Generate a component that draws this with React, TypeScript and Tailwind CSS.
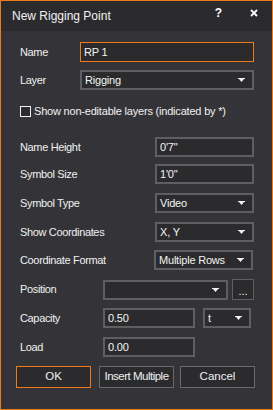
const font = { fontFamily: "'Liberation Sans', Arial, sans-serif" };

function Arrow() {
  return (
    <svg width="7" height="4" viewBox="0 0 7 4" className="shrink-0">
      <path d="M0 0H7V1H6L3.5 4L1 1H0Z" fill="#f2f2f2" />
    </svg>
  );
}

function TextBox({ value, w, active }: { value: string; w: string; active?: boolean }) {
  return (
    <div
      className={`${w} h-[20px] flex items-center px-[3px] bg-[#2b2b2d] text-[#f4f4f4] text-[11px] tracking-[-0.2px] ${
        active ? 'border border-[#f07a1a]' : 'border-2 border-[#5f5f62]'
      }`}
    >
      {value}
    </div>
  );
}

function Select({ value, w }: { value: string; w: string }) {
  return (
    <div className={`${w} h-[20px] flex items-center justify-between pl-[3px] pr-[7px] bg-[#2b2b2d] border-2 border-[#5f5f62] text-[#f4f4f4] text-[11px] tracking-[-0.2px]`}>
      <span>{value}</span>
      <Arrow />
    </div>
  );
}

function Row({ label, lw, mt, children }: { label: string; lw: string; mt: string; children: React.ReactNode }) {
  return (
    <div className={`flex items-center ${mt}`}>
      <div className={`${lw} shrink-0 pl-[19px] text-[11px] text-[#f0f0f0] tracking-[-0.35px]`}>{label}</div>
      {children}
    </div>
  );
}

export default function App() {
  return (
    <div className="w-[273px] h-[410px] border border-[#f07a1a] bg-[#343438] flex flex-col" style={font}>
      {/* Title bar */}
      <div className="h-[30px] bg-[#2b2b2e] flex items-center pl-[11px] pr-[14px] text-white">
        <span className="text-[12px] text-[#f2f2f2]">New Rigging Point</span>
        <span className="ml-auto text-[12px] font-bold mr-[28px] -mt-[6px]">?</span>
        <svg width="8" height="8" viewBox="0 0 8 8" className="-mt-[6px]">
          <path d="M1 1L7 7M7 1L1 7" stroke="#fff" strokeWidth="1.8" />
        </svg>
      </div>

      {/* Body */}
      <div className="flex flex-col">
        <Row label="Name" lw="w-[79px]" mt="mt-[11px]">
          <TextBox value="RP 1" w="w-[174px]" active />
        </Row>
        <Row label="Layer" lw="w-[79px]" mt="mt-[8px]">
          <Select value="Rigging" w="w-[174px]" />
        </Row>

        <div className="flex items-center mt-[16px] pl-[19px] h-[11px]">
          <div className="w-[11px] h-[11px] border border-[#f0f0f0] bg-[#2b2b2d]" />
          <span className="ml-[3px] text-[11px] text-[#f0f0f0] tracking-[-0.2px]">Show non-editable layers (indicated by *)</span>
        </div>

        <Row label="Name Height" lw="w-[154px]" mt="mt-[20px]">
          <TextBox value={'0\'7"'} w="w-[99px]" />
        </Row>
        <Row label="Symbol Size" lw="w-[154px]" mt="mt-[7px]">
          <TextBox value={'1\'0"'} w="w-[99px]" />
        </Row>
        <Row label="Symbol Type" lw="w-[154px]" mt="mt-[9px]">
          <Select value="Video" w="w-[99px]" />
        </Row>
        <Row label="Show Coordinates" lw="w-[154px]" mt="mt-[9px]">
          <Select value="X, Y" w="w-[99px]" />
        </Row>
        <Row label="Coordinate Format" lw="w-[153px]" mt="mt-[8px]">
          <Select value="Multiple Rows" w="w-[99px]" />
        </Row>

        <Row label="Position" lw="w-[102px]" mt="mt-[9px]">
          <Select value="" w="w-[125px]" />
          <div className="ml-[4px] w-[22px] h-[21px] border border-[#5f5f62] bg-[#2b2b2d] flex items-center justify-center text-[11px] text-[#f0f0f0] pt-[3px]">
            ...
          </div>
        </Row>
        <Row label="Capacity" lw="w-[102px]" mt="mt-[8px]">
          <TextBox value="0.50" w="w-[92px]" />
          <div className="ml-[8px]">
            <Select value="t" w="w-[48px]" />
          </div>
        </Row>
        <Row label="Load" lw="w-[102px]" mt="mt-[9px]">
          <TextBox value="0.00" w="w-[92px]" />
        </Row>

        <div className="flex mt-[9px] pl-[15px] gap-[9px] text-[11.5px] text-[#f0f0f0]">
          <button className="w-[75px] h-[22px] border border-[#f07a1a] bg-[#2b2b2d]">OK</button>
          <button className="w-[75px] h-[22px] border border-[#6a6a6d] bg-[#2b2b2d] -ml-[1px] tracking-[-0.5px]">Insert Multiple</button>
          <button className="w-[75px] h-[22px] border border-[#6a6a6d] bg-[#2b2b2d] -ml-[3px]">Cancel</button>
        </div>
      </div>
    </div>
  );
}
